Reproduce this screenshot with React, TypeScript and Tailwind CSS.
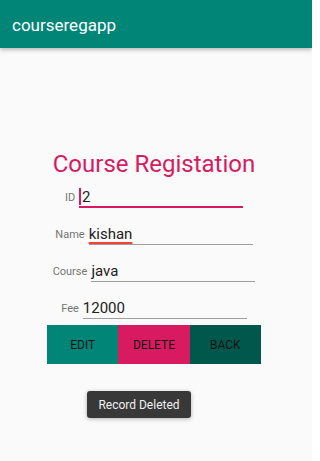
import React from "react";

const fields = [
  { label: "ID", value: "2", focused: true },
  { label: "Name", value: "kishan", misspelled: true },
  { label: "Course", value: "java" },
  { label: "Fee", value: "12000" },
];

const App = () => {
  return (
    <div className="relative h-[461px] w-[312px] overflow-hidden bg-[#fafafa] font-['Roboto',sans-serif]">
      {/* app bar */}
      <div className="relative z-10 flex h-12 items-center bg-[#008577] px-3 pt-1 shadow-[0_2px_4px_rgba(0,0,0,0.25)]">
        <span className="text-[17px] text-white">courseregapp</span>
      </div>

      <div className="ml-[47px] w-[214px] pt-[101px]">
        <h1 className="text-center text-[24px] leading-[30px] text-[#D81B60]">Course Registation</h1>

        <div className="mt-[8px] flex flex-col gap-[16px]">
          {fields.map((f) => (
            <div key={f.label} className="flex items-center justify-center gap-1">
              <span className="text-[11px] leading-none text-[#757575]">{f.label}</span>
              <div
                className={`flex h-[21px] w-[164px] items-start text-[15px] leading-5 text-[#212121] ${
                  f.focused ? "border-b-2 border-[#D81B60]" : "border-b border-[#9e9e9e]"
                }`}
              >
                {f.focused && <span className="mt-[1px] mr-[1px] inline-block h-[17px] w-[2px] bg-[#D81B60]" />}
                <span
                  className={
                    f.misspelled ? "underline decoration-[#f44336] decoration-[1.5px] underline-offset-[3px]" : ""
                  }
                >
                  {f.value}
                </span>
              </div>
            </div>
          ))}
        </div>

        <div className="mt-[6px] grid h-[39px] grid-cols-3 text-[12px] text-[#141414]">
          <button className="bg-[#008577] uppercase">Edit</button>
          <button className="bg-[#D81B60] uppercase">Delete</button>
          <button className="bg-[#00574B] uppercase">Back</button>
        </div>
      </div>

      {/* toast */}
      <div className="absolute left-[87px] top-[391px] flex h-[27px] w-[104px] items-center justify-center rounded-[3px] bg-[#383838] text-[12px] text-[#f0f0f0] shadow-[0_1px_4px_rgba(0,0,0,0.3)]">
        Record Deleted
      </div>
    </div>
  );
};

export default App;
